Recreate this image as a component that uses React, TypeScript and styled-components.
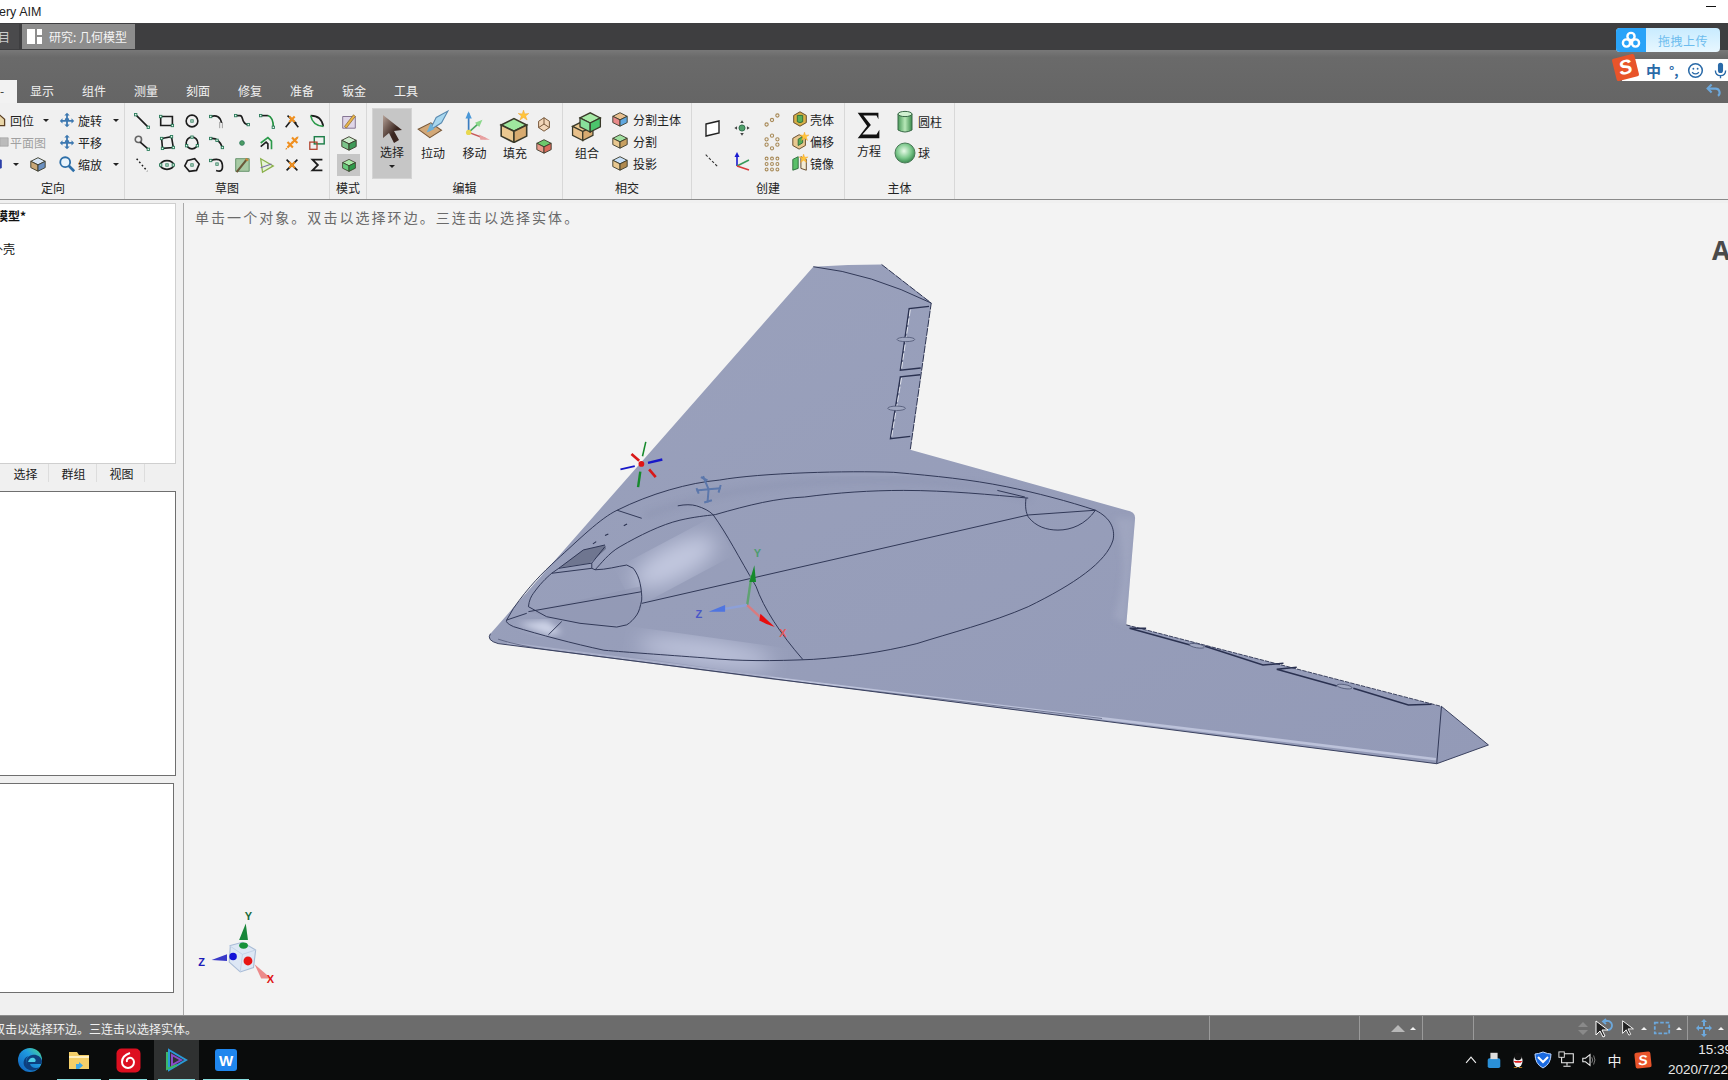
import React from "react";
import styled, { createGlobalStyle } from "styled-components";

const Global = createGlobalStyle`
  html, body { margin: 0; padding: 0; background: #f0f0f0; }
  body { font-family: "Noto Sans CJK SC", "Liberation Sans", sans-serif; overflow: hidden; }
`;

const Screen = styled.div`
  position: relative; width: 1728px; height: 1080px; overflow: hidden;
  display: flex; flex-direction: column; font-size: 12px; color: #222;
`;
const TitleBar = styled.div`
  height: 23px; background: #fff; display: flex; align-items: center; justify-content: space-between;
  padding-right: 12px; font: 12.5px "Liberation Sans", sans-serif; color: #222; flex: none;
`;
const TitleText = styled.span` margin-left: -1px; `;
const MinDash = styled.span` width: 10px; height: 1px; background: #111; margin-bottom: 10px; `;
const DocBar = styled.div`
  height: 27px; flex: none; background: #3e3e40; display: flex; gap: 3px; padding-top: 1px; box-sizing: border-box;
`;
const DocTab = styled.div<{ $active?: boolean; $w: number }>`
  width: ${p => p.$w}px; height: 25px; background: ${p => (p.$active ? "#8d8d8d" : "#4a4a4c")};
  color: ${p => (p.$active ? "#f4f4f4" : "#ccc")}; display: flex; align-items: center; gap: 7px;
  padding-left: ${p => (p.$active ? 5 : 0)}px; box-sizing: border-box; font-size: 12px;
  justify-content: ${p => (p.$active ? "flex-start" : "flex-end")};
  padding-right: ${p => (p.$active ? 0 : 9)}px;
`;
const TabBand = styled.div`
  height: 53px; flex: none; background: linear-gradient(#767676, #6a6a6a 12%, #656565);
  border-top: 1px solid #777; box-sizing: border-box; display: flex; align-items: flex-end;
`;
const RibbonTab = styled.div<{ $active?: boolean }>`
  height: 23px; display: flex; align-items: center; box-sizing: border-box; padding-bottom: 3px;
  ${p => p.$active
    ? "width: 17px; background: #f2f2f2; margin-right: 13px; color: #333; justify-content: flex-start;"
    : "width: 24px; margin-right: 28px; color: #f0f0f0; justify-content: center; white-space: nowrap;"}
  font-size: 12px;
`;
const Ribbon = styled.div`
  height: 97px; flex: none; background: #f0f0f0; border-bottom: 1px solid #8a8a8a; box-sizing: border-box;
  display: flex;
`;
const Group = styled.div<{ $w: number }>`
  width: ${p => p.$w}px; flex: none; display: flex; flex-direction: column; box-sizing: border-box;
  border-right: 1px solid #d8d8d8;
`;
const GroupBody = styled.div`
  height: 76px; display: flex; flex: none; box-sizing: border-box;
`;
const GroupLabel = styled.div<{ $shift?: number }>`
  height: 18px; display: flex; align-items: center; justify-content: center; font-size: 12px; color: #222; line-height: 1;
  padding-right: ${p => p.$shift ?? 0}px;
`;
const OrientGrid = styled.div`
  display: grid; grid-template-columns: 55px 68px; grid-auto-rows: 22px; padding-top: 6px;
`;
const ToolRow = styled.div<{ $ml?: number; $gap?: number; $off?: boolean }>`
  display: flex; align-items: center; margin-left: ${p => p.$ml ?? 0}px; gap: ${p => p.$gap ?? 3}px;
  white-space: nowrap; color: ${p => (p.$off ? "#a0a0a0" : "#222")}; min-width: 0;
`;
const Drop = styled.span<{ $ml?: number; $mt?: number; $color?: string }>`
  width: 0; height: 0; border-left: 3px solid transparent; border-right: 3px solid transparent;
  border-top: 3px solid ${p => p.$color ?? "#222"}; margin-left: ${p => p.$ml ?? 4}px; margin-top: ${p => p.$mt ?? 0}px; flex: none;
`;
const SketchGrid = styled.div`
  display: grid; grid-template-columns: repeat(8, 25px); grid-auto-rows: 22px; padding: 7px 0 0 4px;
`;
const Cell = styled.div<{ $on?: boolean }>`
  display: flex; align-items: center; justify-content: center;
  ${p => p.$on ? "background: #c6c6c6; margin: 0 6px; " : ""}
`;
const ModeCol = styled.div`
  width: 37px; display: grid; grid-auto-rows: 22px; padding: 7px 0 0 1px; box-sizing: border-box;
`;
const SelectBtn = styled.div`
  width: 40px; height: 71px; margin: 5px 0 0 5px; background: #c6c6c6; border: 1px solid #d4d4d4; box-sizing: border-box;
  display: flex; flex-direction: column; align-items: center; flex: none;
`;
const SelectIconBox = styled.div` height: 36px; display: flex; align-items: flex-end; `;
const BigLabel = styled.span` font-size: 12px; line-height: 14px; white-space: nowrap; `;
const BigTool = styled.div<{ $w: number }>`
  width: ${p => p.$w}px; flex: none; display: flex; flex-direction: column; align-items: center; padding-top: 6px; gap: 3px;
`;
const SmallCol = styled.div<{ $w?: number; $gap?: number; $pt?: number; $ml?: number }>`
  ${p => (p.$w ? `width: ${p.$w}px; flex: none;` : "")}
  display: flex; flex-direction: column; gap: ${p => p.$gap ?? 0}px; padding-top: ${p => p.$pt ?? 5}px; margin-left: ${p => p.$ml ?? 0}px;
`;
const SmallRow = styled.div<{ $h?: number; $gap?: number }>`
  height: ${p => p.$h ?? 22}px; display: flex; align-items: center; gap: ${p => p.$gap ?? 4}px; white-space: nowrap;
`;
const CreateWrap = styled.div`
  display: flex; padding-left: 5px; flex: none;
`;
const CreateCol = styled.div<{ $rowH: number; $pt: number }>`
  width: 30px; display: grid; grid-auto-rows: ${p => p.$rowH}px; padding-top: ${p => p.$pt}px; flex: none;
`;
const Main = styled.div`
  height: 815px; flex: none; display: flex; padding-top: 3px; box-sizing: border-box; background: #f0f0f0;
`;
const Sidebar = styled.div`
  width: 183px; flex: none; display: flex; flex-direction: column; overflow: hidden;
`;
const Panel = styled.div<{ $h: number; $w: number; $dark?: boolean; $mt?: number }>`
  width: ${p => p.$w}px; height: ${p => p.$h}px; margin-top: ${p => p.$mt ?? 0}px; flex: none; background: #fff; box-sizing: border-box;
  border: 1px solid ${p => (p.$dark ? "#6f6f6f" : "#cfcfcf")}; border-left: none; overflow: hidden;
`;
const TreeRow = styled.div<{ $ml: number; $bold?: boolean; $mt: number }>`
  margin: ${p => p.$mt}px 0 0 ${p => p.$ml}px; font-size: 12px; font-weight: ${p => (p.$bold ? 700 : 400)}; color: #111; line-height: 14px; white-space: nowrap;
`;
const SideTabs = styled.div`
  height: 27px; width: 175px; flex: none; display: flex; box-sizing: border-box; padding-left: 1px;
`;
const SideTab = styled.div`
  width: 48px; height: 18px; border-right: 1px solid #ddd; border-left: 1px solid transparent; box-sizing: border-box;
  display: flex; align-items: center; justify-content: center; font-size: 12px; color: #222; padding-left: 1px;
`;
const Viewport = styled.div`
  position: relative; flex: 1; background: #f3f3f3; border-left: 1px solid #a9a9a9; overflow: hidden;
`;
const Hint = styled.div`
  position: absolute; left: 11px; top: 5px; font-size: 14px; letter-spacing: 2.05px; color: #6a6a6a; white-space: nowrap; line-height: 18px;
`;
const CutLetter = styled.div`
  position: absolute; right: -2px; top: 32px; font: 700 26px "Open Sans", "Liberation Sans", sans-serif; color: #4a4a4a; line-height: 30px;
`;
const Scene = styled.svg`
  position: absolute; left: -184px; top: -203px; width: 1728px; height: 1080px; pointer-events: none;
`;
const StatusBar = styled.div`
  height: 25px; flex: none; background: #6c6c6c; border-top: 1px solid #8d8d8d; box-sizing: border-box;
  display: flex; align-items: center; color: #f0f0f0; font-size: 12px; position: relative;
`;
const StatusText = styled.div` margin-left: -7px; white-space: nowrap; width: 1216px; flex: none; `;
const StatusCell = styled.div<{ $w: number; $pl?: number }>`
  width: ${p => p.$w}px; height: 100%; flex: none; border-left: 1px solid #9a9a9a; box-sizing: border-box;
  display: flex; align-items: center; padding-left: ${p => p.$pl ?? 0}px; gap: 5px;
`;
const StatusTools = styled.div`
  flex: 1; height: 100%; display: flex; align-items: center; border-left: 1px solid #9a9a9a; padding-left: 104px; overflow: hidden;
`;
const Spinner = styled.div`
  display: flex; flex-direction: column; gap: 3px; flex: none; margin-right: 5px;
`;
const DownTri = styled.span`
  width: 0; height: 0; border-left: 5px solid transparent; border-right: 5px solid transparent; border-top: 5px solid #8a8a8a;
`;
const ToolDivider = styled.span`
  width: 1px; height: 100%; background: #9a9a9a; flex: none; margin: 0 6px 0 5px;
`;
const UpTri = styled.span<{ $color?: string; $s?: number; $ml?: number }>`
  width: 0; height: 0; flex: none; margin-left: ${p => p.$ml ?? 0}px;
  border-left: ${p => p.$s ?? 3}px solid transparent; border-right: ${p => p.$s ?? 3}px solid transparent;
  border-bottom: ${p => p.$s ?? 3}px solid ${p => p.$color ?? "#f2f2f2"};
`;
const Taskbar = styled.div`
  height: 40px; flex: none; background: #0a0c0c; display: flex; align-items: center; position: relative; color: #eee;
`;
const TaskBtn = styled.div<{ $active?: boolean; $w: number; $line?: boolean }>`
  width: ${p => p.$w}px; height: 40px; flex: none; display: flex; align-items: center; justify-content: center; position: relative;
  background: ${p => (p.$active ? "#2f3131" : "transparent")};
  ${p => p.$line ? `&::after { content: ""; position: absolute; left: 4px; right: 4px; bottom: 0; height: 1.5px; background: #8adfe0; }` : ""}
`;
const WpsBox = styled.div`
  width: 22px; height: 22px; border-radius: 3px; background: #1f86ee; color: #fff; display: flex; align-items: center; justify-content: center;
  font: 700 15px "Liberation Sans", sans-serif;
`;
const SogouBox = styled.div<{ $size: number; $rot: number }>`
  width: ${p => p.$size}px; height: ${p => p.$size}px; background: #e8542a; color: #fff; border-radius: 2px; flex: none;
  transform: rotate(${p => p.$rot}deg); display: flex; align-items: center; justify-content: center;
  font: italic 900 ${p => p.$size * 0.88}px/1 "Liberation Sans", sans-serif;
`;
const Tray = styled.div`
  margin-left: auto; display: flex; align-items: center; gap: 0; height: 100%;
`;
const TrayItem = styled.div<{ $w: number }>`
  width: ${p => p.$w}px; flex: none; display: flex; align-items: center; justify-content: center; font-size: 14px; color: #eee;
`;
const Clock = styled.div`
  width: 60px; flex: none; display: flex; flex-direction: column; align-items: flex-end; font: 13.5px "Liberation Sans", sans-serif; line-height: 20px; white-space: nowrap; color: #e8e8e8;
  & > span:first-child { margin-right: -4px; }
`;
const UploadBox = styled.div`
  position: absolute; left: 1616px; top: 28px; width: 104px; height: 24px; border-radius: 4px; overflow: hidden; display: flex; background: linear-gradient(#c8ebff, #e8f7ff);
`;
const UploadIcon = styled.div`
  width: 30px; background: #2aa3f8; display: flex; align-items: center; justify-content: center; flex: none;
`;
const UploadText = styled.div`
  flex: 1; display: flex; align-items: center; justify-content: center; color: #6cbcee; font-size: 12px; letter-spacing: 0.5px;
`;
const ImeBar = styled.div`
  position: absolute; left: 1622px; top: 59px; width: 106px; height: 22px; background: #fff; display: flex; align-items: center;
  padding-left: 24px; box-sizing: border-box; gap: 8px; color: #2a6aa8;
`;
const ImeChar = styled.span<{ $size: number }>` font-size: ${p => p.$size}px; font-weight: 700; line-height: 1; `;
const ImeLogo = styled.div`
  position: absolute; left: 1614px; top: 56px;
`;
const UndoMark = styled.svg`
  position: absolute; left: 1706px; top: 83px; width: 16px; height: 16px;
`;

/* ---------- icons ---------- */
const Svg = styled.svg<{ $s: number; $ml?: number }>`
  width: ${p => p.$s}px; height: ${p => p.$s}px; flex: none; margin-left: ${p => p.$ml ?? 0}px; display: block;
`;
const N = ({ x, y }: { x: number; y: number }) => (
  <rect x={x - 1.3} y={y - 1.3} width="2.6" height="2.6" fill="#e8f5ea" stroke="#2c7d5c" strokeWidth="1" />
);
const K = "#1c1c1c";
const B = { fill: "none", stroke: K, strokeWidth: 1.8 } as const;
const Burst = ({ x, y }: { x: number; y: number }) => (
  <path d={`M${x - 3} ${y - 3}L${x + 3} ${y + 3}M${x + 3} ${y - 3}L${x - 3} ${y + 3}`} stroke="#f09020" strokeWidth="2.4" fill="none" />
);

const sketchIcons: React.ReactNode[] = [
  <g><path d="M4 4L16 16" {...B} /><N x={3} y={3} /><N x={17} y={17} /></g>,
  <g><path d="M3 5h13v10H3z" {...B} /><N x={3} y={5} /><N x={16} y={15} /></g>,
  <g><circle cx="10" cy="10" r="6.5" {...B} /><N x={10} y={10} /></g>,
  <g><path d="M3 5Q13 2 15 12" {...B} /><path d="M13 11v7M16 11v7" stroke="#999" strokeWidth="1" /><N x={3} y={5} /></g>,
  <g><path d="M3 4h5c3 0 2 5 4 7 1 2 3 3 5 3" {...B} /><N x={3} y={4} /><N x={17} y={14} /></g>,
  <g><path d="M3 4h8" {...B} /><path d="M11 4q6 2 6 13" fill="none" stroke="#1f8f3d" strokeWidth="1.8" /><N x={3} y={4} /><N x={17} y={17} /></g>,
  <g><path d="M3 17L10 8L17 17M5 4L15 13" {...B} /><Burst x={10} y={8} /></g>,
  <g><path d="M3 4Q15 4 17 16" {...B} /><path d="M3 4Q5 15 17 16" fill="none" stroke="#2b9a4a" strokeWidth="1.8" /></g>,

  <g><circle cx="6" cy="6" r="3.5" fill="none" stroke="#666" strokeWidth="1.8" /><path d="M8 9L16 16" {...B} /><N x={17} y={17} /></g>,
  <g><path d="M4 5L15 3L17 15L5 16Z" {...B} /><N x={4} y={5} /><N x={15} y={3} /><N x={17} y={15} /><N x={5} y={16} /></g>,
  <g><circle cx="10" cy="10" r="6.5" {...B} /><N x={10} y={3.5} /><N x={16} y={13} /><N x={4} y={13} /></g>,
  <g><path d="M3 5Q12 4 16 15" {...B} /><N x={3} y={5} /><N x={10} y={7} /><N x={16} y={15} /></g>,
  <g><circle cx="10" cy="10" r="2.6" fill="#4f9d63" stroke="#2c7d5c" /></g>,
  <g><path d="M3 10L11 4L15 8V17" fill="none" stroke="#2b9a4a" strokeWidth="1.8" /><path d="M3 14L9 9L11 11V17" {...B} /></g>,
  <g><path d="M3 17L17 3" stroke="#e08a20" strokeWidth="1.2" strokeDasharray="2 1" /><Burst x={8} y={12} /><Burst x={13} y={7} /></g>,
  <g><rect x="7" y="3" width="11" height="8" fill="none" stroke="#1f7f4a" strokeWidth="1.6" /><rect x="2" y="9" width="8" height="8" fill="none" stroke="#b0402a" strokeWidth="1.4" /></g>,

  <g><path d="M4 3L16 17" stroke={K} strokeWidth="1.6" strokeDasharray="2 2.5" /></g>,
  <g><ellipse cx="10" cy="10" rx="7.5" ry="4.8" {...B} /><N x={10} y={10} /><N x={3} y={10} /><N x={17} y={10} /></g>,
  <g><path d="M5 5L13 3L18 9L15 16L7 17L2 11Z" {...B} /><N x={10} y={10} /></g>,
  <g><path d="M3 5Q15 1 16 10T9 16" {...B} /><N x={3} y={5} /><N x={10} y={9} /></g>,
  <g><path d="M3 3H18V17H3Z" fill="#a8caa4" stroke="#5b8c62" /><path d="M4 18L16 3" stroke="#6b5a3a" strokeWidth="2.4" /><path d="M14 3l3 2" stroke="#c98a3a" strokeWidth="2" /></g>,
  <g><path d="M3 3L17 11L5 18Z" fill="#e6f3d8" stroke="#8ab04a" strokeWidth="1.4" /><path d="M3 13L15 9" stroke="#7a6aa8" strokeWidth="1.2" /></g>,
  <g><path d="M4 4L16 16M16 4L4 16" {...B} /><Burst x={10} y={10} /></g>,
  <g><path d="M16 4H5L11 10L5 16H16" fill="none" stroke={K} strokeWidth="2" /></g>,
];

const I = ({ s = 18, ml, v = 20, children }: { s?: number; ml?: number; v?: number; children: React.ReactNode }) => (
  <Svg $s={s} $ml={ml} viewBox={`0 0 ${v} ${v}`}>{children}</Svg>
);

const Box = ({ top = "#a4e6a4", side = "#4cae5c", front = "#d9ab70", x = 0, y = 0, k = 1 }: any) => (
  <g transform={`translate(${x} ${y}) scale(${k})`}>
    <path d="M2 7L10 3L18 7L10 11Z" fill={top} stroke="#3a3a2a" strokeWidth="1" />
    <path d="M2 7V14L10 18V11Z" fill={front} stroke="#3a3a2a" strokeWidth="1" />
    <path d="M18 7V14L10 18V11Z" fill={side} stroke="#3a3a2a" strokeWidth="1" />
  </g>
);
const Star = ({ x, y }: { x: number; y: number }) => (
  <path d={`M${x} ${y - 5}L${x + 1.2} ${y - 1.4}L${x + 5} ${y - 1.8}L${x + 2} ${y + .6}L${x + 3.4} ${y + 4.4}L${x} ${y + 2}L${x - 3.4} ${y + 4.4}L${x - 2} ${y + .6}L${x - 5} ${y - 1.8}L${x - 1.2} ${y - 1.4}Z`} fill="#ffc53a" stroke="#f09a20" strokeWidth=".4" />
);

const RotateIcon = () => (
  <I s={18}><g fill="#3d78b0"><path d="M10 2l3 3h-2v3H9V5H7z" /><path d="M2 11l3-3v2h3v2H5v2z" /><path d="M18 11l-3 3v-2h-3v-2h3V8z" /><path d="M10 18l-3-3h2v-3h2v3h2z" /></g><circle cx="10" cy="10" r="2.5" fill="#3d78b0" /></I>
);
const ZoomIcon = () => (
  <I s={18}><circle cx="8" cy="8" r="5.5" fill="#eaf4fb" stroke="#2c6ea8" strokeWidth="2" /><path d="M12 12L18 18" stroke="#2c6ea8" strokeWidth="3" /></I>
);
const HouseIcon = ({ ml }: { ml: number }) => (
  <I s={16} ml={ml}><path d="M3 9L10 3L17 9V17H3Z" fill="#e9d6a8" stroke="#5a3e22" strokeWidth="1.6" /></I>
);

/* ---------- aircraft ---------- */
const bodyPath = "M445,575 L738,242 Q770,240 800,240 L845,275 L826,408 L1022,463 Q1030,464 1030,470 L1022,567 L1308,641 L1350.6,676 L1303.7,693 L452,584 Q441,581 445,575 Z";

const Aircraft = () => (
  <Scene viewBox="0 0 1568 980">
    <defs>
      <linearGradient id="body" x1="0" y1="0" x2="1" y2="1">
        <stop offset="0" stopColor="#9aa1bc" />
        <stop offset="1" stopColor="#939ab7" />
      </linearGradient>
      <filter id="b8"><feGaussianBlur stdDeviation="9" /></filter>
      <filter id="b3"><feGaussianBlur stdDeviation="3" /></filter>
      <filter id="b1"><feGaussianBlur stdDeviation=".6" /></filter>
      <clipPath id="clipBody"><path d={bodyPath} /></clipPath>
    </defs>
    <path d={bodyPath} fill="url(#body)" />
    <g clipPath="url(#clipBody)">
      <ellipse cx="612" cy="510" rx="42" ry="16" fill="#c2c8df" filter="url(#b8)" transform="rotate(-28 612 510)" />
      <ellipse cx="640" cy="592" rx="62" ry="11" fill="#bfc5dd" filter="url(#b8)" transform="rotate(8 640 592)" />
      <path d="M470,566 L496,563 L510,574 L497,576 Z" fill="#ccd2e6" filter="url(#b3)" />
      <path d="M585,468 Q680,432 830,436 Q900,440 935,452" fill="none" stroke="#838aa8" strokeWidth="5" filter="url(#b3)" opacity=".3" />
      <path d="M460,584 L700,615" stroke="#aab0ca" strokeWidth="3" filter="url(#b1)" />
      <path d="M700,615 L1303,689" stroke="#bcc2da" strokeWidth="2.4" filter="url(#b1)" />
      <path d="M1012,470 Q1026,520 1010,560 L1022,567 L1030,470Z" fill="#a8aec6" opacity=".5" filter="url(#b3)" />
      <path d="M479,555 L582,532 L582,553 L568,567 L528,566Z" fill="#8f96b2" opacity=".5" />
    </g>
    <path d="M508,515 L529,499 L549,494.5 L550,498 L540,507 L535,511Z" fill="#6f7690" />
    <g fill="none" stroke="#2a3150" strokeWidth=".85">
      {/* outer dome */}
      <path d="M459.8,562.6 L465.9,552 C480,532 492,520 505,508 C525,490 545,470 560,463 C590,448 625,438 653,435.6 C690,429 770,427 811,428.6 C850,432 880,435 913,441.6 C940,447 970,455 994,463 C1008,470 1012,480 1010,490 C1004,510 975,530 933,550.5 C900,565 860,575 832,584 C800,592 770,596 738,598.3 C700,600 670,600 640,597 C600,594 570,592 548,590 C520,584 490,576 465.9,568.6 Q458,565 459.8,562.6" />
      {/* inner shoulder line */}
      <path d="M540,517 C545,512 552,502 562.7,496 C580,486 600,476 617,472 C630,469 640,468 649,467 C680,458 705,452 730,451 C760,447 790,445 820,445 C860,445 900,449 933,452" />
      {/* centre line */}
      <path d="M479.5,555 L581.7,537" />
      <path d="M582.3,547.5 L933,467.3 L994,463" />
      {/* cross section */}
      <path d="M615,459 Q625,457 632,459 Q642,462 647,467 C660,485 670,505 686,532 C693,552 708,575 728.4,598.3" />
      {/* intake */}
      <path d="M479.5,550.5 C480,545 482,541 484,538.4 C490,530 495,525 500.6,520.2 L537,515.7 L540,517 C550,517 560,514 568.7,512.7 L574.7,515.7 C578,520 580,525 580.8,529.3 C582,535 582.5,540 582.3,544.5 C581,550 580,555 577.8,558 C575,562 572,565 568.7,567 L559.6,569 L526.3,565.6 L496,559.6 L479.5,550.5Z" />
      <path d="M500.6,520.2 L507,515.7 L537,511 M537,515.7 L537,511 L549,496 M507,515.7 L529.4,499 L549,494.5" />
      {/* leading lines */}
      <path d="M560,463 L582.3,470.3" />
      <path d="M459.8,562.6 L478,556.5" />
      <path d="M497.6,576 L509.7,564" />
      <path d="M538,493.5 L541,491.5 M549,486 L552,484.5 M566,477 L569,475.5" strokeWidth="1" />
      {/* exhaust circle */}
      <path d="M931,452 C930,460 931,465 933,469 C940,478 950,481 960,481 C972,481 985,476 994,463" />
      <path d="M905,445 L930,451" />
      {/* wing tip */}
      <path d="M738,242 Q790,248 845,275" />
      <path d="M1308,641 L1303.7,693" />
      <path d="M452,580 Q470,586 500,590 L700,616 L1000,652" strokeOpacity=".55" />
    </g>
    <path d="M1308,641 L1350.6,676 L1303.7,693 L452,584 Q441,581 445,575" fill="none" stroke="#39405e" strokeWidth=".9" />
    <path d="M800,240 L845,275 L826,408" fill="none" stroke="#2b3250" strokeWidth=".9" strokeDasharray="7 1" />
    <path d="M1022,567 L1308,641" fill="none" stroke="#2b3250" strokeWidth=".8" strokeDasharray="4 1" />
    {/* upper flaps */}
    <g fill="none" stroke="#2a3150" strokeWidth="1.3">
      <path d="M843,278 L825,280 L817,336 L835.5,334" />
      <path d="M835,340 L817,342 L808,398 L826,396" />
    </g>
    <g fill="none" stroke="#eef0f6" strokeWidth=".8" strokeDasharray="6 2">
      <path d="M826,281 L818,335" />
      <path d="M818,343 L809,397" />
    </g>
    {/* trailing flaps */}
    <g fill="none" stroke="#2a3150" strokeWidth="1.4">
      <path d="M1025,570 L1040,570 M1025,570 L1080,585.3 M1093.5,586.5 L1146,603.4 L1164.6,601.9" />
      <path d="M1158.5,607.3 L1176.7,605.5 M1158.5,607.3 L1213,622.5 M1228,624.6 L1278,639.7 L1299,639" />
    </g>
    <g fill="#a0a7c0" stroke="#4a5270" strokeWidth=".7">
      <ellipse cx="822" cy="308" rx="8" ry="2" />
      <ellipse cx="813.6" cy="370.5" rx="8" ry="2" />
      <ellipse cx="1086" cy="586" rx="7" ry="1.8" transform="rotate(10 1086 586)" />
      <ellipse cx="1220" cy="623" rx="7" ry="1.8" transform="rotate(10 1220 623)" />
    </g>
    {/* rotation pin */}
    <g>
      <circle cx="582" cy="421" r="2.6" fill="#e01414" />
      <path d="M573,412L580,418M589,426L595,433" stroke="#d81818" strokeWidth="2.4" />
      <path d="M563,426L576,423" stroke="#1818c8" strokeWidth="1.6" /><path d="M588,420L601,417" stroke="#1818c8" strokeWidth="2.2" />
      <path d="M586,401L583,414" stroke="#168a2c" strokeWidth="1.4" /><path d="M581,428L579,442" stroke="#168a2c" strokeWidth="2.2" />
    </g>
    {/* rotate handle */}
    <g fill="none" stroke="#5b77ab" strokeWidth="1.8" filter="url(#b1)">
      <path d="M643,444L638,432M643,444L654,443M643,444L642,456M643,444L632,445" />
      <path d="M636,433L642,436M654,440L652,447M639,456L646,454M632,443L634,448" />
    </g>
    {/* centre triad */}
    <g filter="url(#b1)">
      <path d="M678,549L682,522" stroke="#5fa272" strokeWidth="2.2" />
      <path d="M680,528L684.5,513L686,528Z" fill="#138a2c" />
      <path d="M678,549L655,553" stroke="#8da0d8" strokeWidth="2.2" />
      <path d="M658,549L643,555L658,555Z" fill="#4f74e0" />
      <path d="M678,549L692,562" stroke="#d87b80" strokeWidth="2.2" />
      <path d="M690,557L703,569L695,566L689,563Z" fill="#e80f0f" />
    </g>
    <text x="684" y="505" fontSize="10" fill="#4e9c70" fontFamily="Liberation Sans" fontWeight="700">Y</text>
    <text x="631" y="561" fontSize="10" fill="#4a58c8" fontFamily="Liberation Sans" fontWeight="700">Z</text>
    <text x="707" y="578" fontSize="10" fill="#e05a5a" fontFamily="Liberation Sans" fontWeight="700">X</text>
    {/* corner triad */}
    <g>
      <path d="M209,858L220,855L232,862L230,878L218,882L208,873Z" fill="#dde7f5" stroke="#a9bcd6" strokeWidth="1" />
      <path d="M220,866L232,862M220,866L208,858M220,866L218,882" stroke="#c0d0e6" strokeWidth=".8" fill="none" />
      <ellipse cx="221" cy="858" rx="4" ry="2.8" fill="#16923a" />
      <circle cx="211.5" cy="868" r="3.4" fill="#1212d8" />
      <circle cx="225" cy="872" r="4" fill="#e81414" />
      <path d="M217,853L223,838L225,853Z" fill="#18863a" />
      <path d="M206,866L192,871L206,872Z" fill="#3a3ac8" />
      <path d="M231,875L246,888L237,888Z" fill="#ec8a8a" />
    </g>
    <text x="222" y="835" fontSize="10" fontWeight="700" fill="#1a6a3a" fontFamily="Liberation Sans">Y</text>
    <text x="180" y="877" fontSize="10" fontWeight="700" fill="#1c1cb8" fontFamily="Liberation Sans">Z</text>
    <text x="242" y="892" fontSize="10" fontWeight="700" fill="#e01414" fontFamily="Liberation Sans">X</text>
  </Scene>
);

const tabs = ["显示", "组件", "测量", "刻面", "修复", "准备", "钣金", "工具"];

export default function App() {
  return (
    <Screen>
      <Global />
      <TitleBar>
        <TitleText>ery AIM</TitleText>
        <MinDash />
      </TitleBar>
      <DocBar>
        <DocTab $w={19}>目</DocTab>
        <DocTab $w={113} $active>
          <I s={15} v={15}><path d="M0 0h8v15H0zM10 0h5v6h-5zM10 8h5v7h-5z" fill="#fff" /></I>
          研究: 几何模型
        </DocTab>
      </DocBar>
      <TabBand>
        <RibbonTab $active>-</RibbonTab>
        {tabs.map(t => <RibbonTab key={t}>{t}</RibbonTab>)}
      </TabBand>
      <Ribbon>
        <Group $w={125}>
          <GroupBody>
            <OrientGrid>
              <ToolRow><HouseIcon ml={-9} /><span>回位</span><Drop $ml={6} /></ToolRow>
              <ToolRow $ml={3} $gap={2}><RotateIcon /><span>旋转</span><Drop $ml={9} /></ToolRow>
              <ToolRow $off $gap={0}><I s={12} ml={-2}><path d="M3 3h14v14H3z" fill="#bbb" stroke="#999" /></I><span>平面图</span></ToolRow>
              <ToolRow $ml={3} $gap={2}><RotateIcon /><span>平移</span></ToolRow>
              <ToolRow $gap={4}>
                <I s={16} ml={-11}><path d="M2 5L9 2L16 5V15L9 18L2 15Z" fill="#2b3fa8" /></I>
                <Drop $ml={4} />
                <I s={18} ml={6}><Box top="#d8e6f5" side="#6a8fc0" front="#c9a878" /></I>
              </ToolRow>
              <ToolRow $ml={3} $gap={2}><ZoomIcon /><span>缩放</span><Drop $ml={9} /></ToolRow>
            </OrientGrid>
          </GroupBody>
          <GroupLabel $shift={18}>定向</GroupLabel>
        </Group>
        <Group $w={205}>
          <GroupBody>
            <SketchGrid>
              {sketchIcons.map((ic, i) => <Cell key={i}><I s={18}>{ic}</I></Cell>)}
            </SketchGrid>
          </GroupBody>
          <GroupLabel>草图</GroupLabel>
        </Group>
        <Group $w={37}>
          <GroupBody>
            <ModeCol>
              <Cell><I s={18}><path d="M3 5h14v13H3z" fill="#dfd6e8" stroke="#7b6a8a" /><path d="M5 16L15 3l2 2L7 18z" fill="#e7b54a" stroke="#7b5a20" strokeWidth=".7" /></I></Cell>
              <Cell><I s={18}><Box top="#cdeccd" side="#3f9a58" front="#7cc48a" /></I></Cell>
              <Cell $on><I s={16}><Box top="#a8eaa8" side="#2f9a4a" front="#68cc7c" /></I></Cell>
            </ModeCol>
          </GroupBody>
          <GroupLabel>模式</GroupLabel>
        </Group>
        <Group $w={196}>
          <GroupBody>
            <SelectBtn>
              <SelectIconBox>
                <I s={32} v={32}>
                  <defs><linearGradient id="cur" x1="0" y1="0" x2="1" y2="1"><stop offset="0" stopColor="#b8a49a" /><stop offset=".6" stopColor="#3a2620" /></linearGradient></defs>
                  <path d="M7 2L7 25L13 20L18 30L23 27L18 18L26 17Z" fill="url(#cur)" />
                </I>
              </SelectIconBox>
              <BigLabel>选择</BigLabel>
              <Drop $ml={0} $mt={6} />
            </SelectBtn>
            <BigTool $w={42}>
              <I s={34} v={32}><path d="M2 19L14 13L24 20L13 27Z" fill="#d2a878" stroke="#7a5a3a" /><path d="M13 20L19 8L30 2L24 13Z" fill="#a8d8f0" stroke="#5a8ab0" /><path d="M14 13L10 22L17 19Z" fill="#6cb0d8" /></I>
              <BigLabel>拉动</BigLabel>
            </BigTool>
            <BigTool $w={41}>
              <I s={34} v={32}><path d="M10 22V4" stroke="#3a7cc0" strokeWidth="1.6" /><path d="M10 2L7 9H13Z" fill="#4a98d8" /><path d="M10 22L20 13" stroke="#4ca860" strokeWidth="1.5" /><path d="M23 10L16 13L20 17Z" fill="#8ad88a" /><path d="M10 22L26 28" stroke="#c85a5a" strokeWidth="1.5" /><path d="M30 29L20 24L21 29Z" fill="#e8a0a0" /><circle cx="10" cy="22" r="2.5" fill="#e8d850" /></I>
              <BigLabel>移动</BigLabel>
            </BigTool>
            <BigTool $w={40}>
              <I s={34} v={32}><g transform="scale(1.5) translate(0 3)"><Box top="#9fe89f" side="#d8ab70" front="#eac890" /></g><Star x={24} y={6} /></I>
              <BigLabel>填充</BigLabel>
            </BigTool>
            <SmallCol $w={25} $pt={10}>
              <SmallRow><I s={18}><path d="M4 7L10 3L16 7V14L10 18L4 14Z" fill="#f2d6b8" stroke="#6a4a2a" /><path d="M10 3V10L4 14M10 10L16 14" stroke="#6a4a2a" fill="none" /></I></SmallRow>
              <SmallRow><I s={18}><Box top="#6cc86c" side="#d86a5a" front="#e89a8a" /></I></SmallRow>
            </SmallCol>
          </GroupBody>
          <GroupLabel>编辑</GroupLabel>
        </Group>
        <Group $w={129}>
          <GroupBody>
            <BigTool $w={48}>
              <I s={34} v={32}><g transform="translate(0 8) scale(1.2)"><Box top="#eac890" side="#d8ab70" front="#e8c08a" /></g><g transform="translate(7 0) scale(1.2)"><Box top="#a6eaa6" side="#4cc46c" front="#88e09a" /></g></I>
              <BigLabel>组合</BigLabel>
            </BigTool>
            <SmallCol>
              <SmallRow><I s={18}><Box top="#e8c090" side="#60a8e0" front="#e88a8a" /></I><span>分割主体</span></SmallRow>
              <SmallRow><I s={18}><Box top="#a0e0a0" side="#c8a060" front="#e8c890" /></I><span>分割</span></SmallRow>
              <SmallRow><I s={18}><Box top="#c8e0f8" side="#b08a50" front="#e8c890" /></I><span>投影</span></SmallRow>
            </SmallCol>
          </GroupBody>
          <GroupLabel>相交</GroupLabel>
        </Group>
        <Group $w={153}>
          <GroupBody>
            <CreateWrap>
              <CreateCol $rowH={33} $pt={8}>
                <Cell><I s={20}><path d="M4 6L17 3V15L4 18Z" fill="#fff" stroke="#222" strokeWidth="1.4" /></I></Cell>
                <Cell><I s={18}><path d="M3 3L17 17" stroke="#333" strokeWidth="1.2" strokeDasharray="3 2" /></I></Cell>
              </CreateCol>
              <CreateCol $rowH={33} $pt={8}>
                <Cell><I s={18}><circle cx="10" cy="10" r="3.4" fill="#4fa06a" stroke="#2a6a48" /><path d="M10 1.5L8 4.5H12ZM10 18.5L8 15.5H12ZM1.5 10L4.5 8V12ZM18.5 10L15.5 8V12Z" fill="#444" /></I></Cell>
                <Cell><I s={20}><path d="M5 15V4" stroke="#1a1ad0" strokeWidth="1.6" /><path d="M5 1L2.5 6H7.5Z" fill="#1a1ad0" /><path d="M5 15L17 9" stroke="#3a9a5a" strokeWidth="1.6" /><path d="M5 15L17 19" stroke="#d83a3a" strokeWidth="1.6" /></I></Cell>
              </CreateCol>
              <CreateCol $rowH={22} $pt={6}>
                <Cell><I s={18}><g fill="none" stroke="#a88a58" strokeWidth="1.2"><circle cx="4" cy="15" r="1.8" /><circle cx="10" cy="10" r="1.8" /><circle cx="16" cy="5" r="1.8" /></g></I></Cell>
                <Cell><I s={18}><g fill="none" stroke="#a88a58" strokeWidth="1.2"><circle cx="10" cy="3" r="1.8" /><circle cx="4" cy="7" r="1.8" /><circle cx="16" cy="7" r="1.8" /><circle cx="4" cy="13" r="1.8" /><circle cx="16" cy="13" r="1.8" /><circle cx="10" cy="17" r="1.8" /></g></I></Cell>
                <Cell><I s={18}><g fill="none" stroke="#a88a58" strokeWidth="1.2"><circle cx="4" cy="4" r="1.6" /><circle cx="10" cy="4" r="1.6" /><circle cx="16" cy="4" r="1.6" /><circle cx="4" cy="10" r="1.6" /><circle cx="10" cy="10" r="1.6" /><circle cx="16" cy="10" r="1.6" /><circle cx="4" cy="16" r="1.6" /><circle cx="10" cy="16" r="1.6" /><circle cx="16" cy="16" r="1.6" /></g></I></Cell>
              </CreateCol>
            </CreateWrap>
            <SmallCol $ml={4}>
              <SmallRow $gap={1}><I s={18}><path d="M3 6L10 2L17 6V14L10 18L3 14Z" fill="#d8b048" stroke="#5a4020" /><path d="M7 6h6v7q-3 2-6 0z" fill="#58b058" stroke="#2a6a3a" /></I><span>壳体</span></SmallRow>
              <SmallRow $gap={1}><I s={18}><path d="M2 7L9 3L16 7V15L9 19L2 15Z" fill="#e8c890" stroke="#5a4020" /><path d="M8 8L13 5V12L8 15Z" fill="#58b058" stroke="#2a6a3a" /><Star x={15} y={5} /></I><span>偏移</span></SmallRow>
              <SmallRow $gap={1}><I s={18}><path d="M2 6L8 3V16L2 18Z" fill="#5ac06a" stroke="#2a6a3a" /><path d="M11 3L17 6V18L11 16Z" fill="#f4ecd4" stroke="#5a4020" /><Star x={14} y={5} /></I><span>镜像</span></SmallRow>
            </SmallCol>
          </GroupBody>
          <GroupLabel>创建</GroupLabel>
        </Group>
        <Group $w={110}>
          <GroupBody>
            <BigTool $w={48}>
              <I s={32} v={34}><path d="M5 4H27V11L25 7H11L19 17L10 27H25L28 22V31H5L15 18Z" fill="#111" /></I>
              <BigLabel>方程</BigLabel>
            </BigTool>
            <SmallCol $pt={5} $gap={4}>
              <SmallRow $h={27} $gap={1}><I s={24} v={24}><defs><linearGradient id="cyl" x1="0" y1="0" x2="1" y2="0"><stop offset="0" stopColor="#4a9a5a" /><stop offset=".5" stopColor="#b8e8b8" /><stop offset="1" stopColor="#3a8a4a" /></linearGradient></defs><path d="M5 4V20Q12 24 19 20V4Z" fill="url(#cyl)" stroke="#3a6a48" /><ellipse cx="12" cy="4" rx="7" ry="2.6" fill="#d0f0d0" stroke="#3a6a48" /></I><span>圆柱</span></SmallRow>
              <SmallRow $h={27} $gap={1}><I s={24} v={24}><defs><radialGradient id="sph" cx=".45" cy=".4" r=".6"><stop offset="0" stopColor="#e8fae8" /><stop offset=".6" stopColor="#7cc88c" /><stop offset="1" stopColor="#3a8a50" /></radialGradient></defs><circle cx="12" cy="12" r="10" fill="url(#sph)" stroke="#4a7a58" /></I><span>球</span></SmallRow>
            </SmallCol>
          </GroupBody>
          <GroupLabel>主体</GroupLabel>
        </Group>
      </Ribbon>
      <Main>
        <Sidebar>
          <Panel $w={176} $h={261}>
            <TreeRow $bold $ml={-4} $mt={5}>模型*</TreeRow>
            <TreeRow $ml={-9} $mt={19}>外壳</TreeRow>
          </Panel>
          <SideTabs>
            <SideTab>选择</SideTab>
            <SideTab>群组</SideTab>
            <SideTab>视图</SideTab>
          </SideTabs>
          <Panel $w={176} $h={285} $dark />
          <Panel $w={174} $h={210} $mt={7} $dark />
        </Sidebar>
        <Viewport>
          <Hint>单击一个对象。双击以选择环边。三连击以选择实体。</Hint>
          <CutLetter>A</CutLetter>
          <Aircraft />
        </Viewport>
      </Main>
      <StatusBar>
        <StatusText>双击以选择环边。三连击以选择实体。</StatusText>
        <StatusCell $w={150} />
        <StatusCell $w={63} $pl={31}><UpTri $s={7} $color="#b8b8b8" /><UpTri /></StatusCell>
        <StatusCell $w={51} />
        <StatusTools>
          <Spinner><UpTri $s={5} $color="#8a8a8a" /><DownTri /></Spinner>
          <I s={22} v={22}><path d="M3 4V18L7 14L10 20L12 19L9 13H15Z" fill="#222" stroke="#fff" /><path d="M11 4h3a4.5 4.5 0 1 1 1 9M13 2l-3 2.5 3 2.5" fill="none" stroke="#6ca8dc" strokeWidth="1.8" /></I>
          <I s={18} ml={4}><path d="M4 2V16L8 12L11 18L13 17L10 11H16Z" fill="#222" stroke="#fff" /></I>
          <UpTri $ml={4} />
          <I s={18} ml={6}><path d="M2 4h16v12H2z" fill="none" stroke="#6ca8dc" strokeWidth="2" strokeDasharray="4 2" /></I>
          <UpTri $ml={5} />
          <ToolDivider />
          <I s={20}><g fill="#6ca8dc"><path d="M10 1l3 3h-2v4H9V4H7z" /><path d="M2 10l3-3v2h4v2H5v2z" /><path d="M18 10l-3 3v-2h-4V9h4V7z" /><path d="M10 19l-3-3h2v-4h2v4h2z" /></g></I>
          <UpTri $ml={4} />
        </StatusTools>
      </StatusBar>
      <Taskbar>
        <TaskBtn $w={7} />
        <TaskBtn $w={46}>
          <I s={26} v={26}>
            <defs><linearGradient id="edgeL" x1="0" y1="1" x2="1" y2="0"><stop offset="0" stopColor="#0f5cb8" /><stop offset=".6" stopColor="#1f9ae0" /><stop offset="1" stopColor="#4fdc8a" /></linearGradient></defs>
            <circle cx="13" cy="13" r="12" fill="url(#edgeL)" />
            <path d="M25 14C24 9 19 7 15 8C10 9 8 14 10 18C8 15 9 10 12 9C7 10 5 16 8 20C11 24 19 25 23 20C19 22 14 21 13 17H24Q25 16 25 14Z" fill="#0d3f7e" />
            <path d="M11 15C12 11 15 10 17 11C19 12 19 14 18 15Z" fill="#4fd0e8" />
          </I>
        </TaskBtn>
        <TaskBtn $w={52} $line>
          <I s={24} v={24}><path d="M2 4h8l2 3h10v14H2z" fill="#f4cf68" /><path d="M9 21v-5h3l-0 -2 4 3.5-4 3.5" fill="#3fa8e8" /><rect x="2" y="8" width="20" height="2" fill="#fff0c0" /></I>
        </TaskBtn>
        <TaskBtn $w={46} $line>
          <I s={25} v={25}><rect x="0.5" y="0.5" width="24" height="24" rx="5" fill="#dd0f20" /><path d="M14 5C8 7 6 11 6 14a6 6 0 0 0 12 0c0-3-3-5-5-4a3 3 0 0 0-2 4" fill="none" stroke="#fff" strokeWidth="2" /></I>
        </TaskBtn>
        <TaskBtn $w={3} />
        <TaskBtn $w={45} $active $line>
          <I s={24} v={24}><path d="M4 2L21 12L4 22Z" fill="none" stroke="#2a9ad8" strokeWidth="2" /><path d="M7 7L16 12L7 17Z" fill="none" stroke="#8a4ac8" strokeWidth="2" /><path d="M2 4L2 21L12 17" fill="none" stroke="#3ab86a" strokeWidth="2" /></I>
        </TaskBtn>
        <TaskBtn $w={54} $line><WpsBox>W</WpsBox></TaskBtn>
        <Tray>
          <TrayItem $w={22}><I s={14}><path d="M3 14L10 6L17 14" fill="none" stroke="#eee" strokeWidth="1.6" /></I></TrayItem>
          <TrayItem $w={24}><I s={18}><rect x="3" y="8" width="14" height="11" rx="2" fill="#2a90d8" /><rect x="6" y="2" width="8" height="7" fill="#ddd" /></I></TrayItem>
          <TrayItem $w={24}><I s={18}><ellipse cx="10" cy="11" rx="5" ry="7" fill="#f6f6f6" /><circle cx="10" cy="6" r="4.2" fill="#111" /><path d="M5 11h10l-2 2H7z" fill="#e02020" /><path d="M6 18h3v1H5zM11 18h3l1 1h-4z" fill="#f0a020" /></I></TrayItem>
          <TrayItem $w={25}><I s={20}><path d="M10 2Q15 4 18 4Q18 14 10 18Q2 14 2 4Q5 4 10 2Z" fill="#1a6ae0" stroke="#bcd6ff" /><path d="M5 7L10 12L15 7" fill="none" stroke="#fff" strokeWidth="2" /></I></TrayItem>
          <TrayItem $w={24}><I s={18}><path d="M4 3h13v10H4z" fill="none" stroke="#eee" strokeWidth="1.2" /><path d="M10 13v3M6 17h8" stroke="#eee" strokeWidth="1.2" /><rect x="1" y="1" width="6" height="6" fill="#0a0c0c" stroke="#eee" /></I></TrayItem>
          <TrayItem $w={22}><I s={18}><path d="M2 8h3l5-4v12l-5-4H2z" fill="none" stroke="#eee" strokeWidth="1.2" /><path d="M12 7q2 3 0 6M14 5q3 5 0 10" fill="none" stroke="#888" /></I></TrayItem>
          <TrayItem $w={27}>中</TrayItem>
          <TrayItem $w={30}><SogouBox $size={16} $rot={-6}>S</SogouBox></TrayItem>
          <TrayItem $w={10} />
          <Clock><span>15:39</span><span>2020/7/22</span></Clock>
        </Tray>
      </Taskbar>

      <UploadBox>
        <UploadIcon>
          <I s={20}><g fill="none" stroke="#fff" strokeWidth="2.4"><circle cx="10" cy="6.5" r="3.6" /><circle cx="5.5" cy="13" r="3.6" /><circle cx="14.5" cy="13" r="3.6" /></g></I>
        </UploadIcon>
        <UploadText>拖拽上传</UploadText>
      </UploadBox>
      <ImeBar>
        <ImeChar $size={15}>中</ImeChar>
        <ImeChar $size={13}>°,</ImeChar>
        <I s={17}><circle cx="10" cy="10" r="8" fill="none" stroke="#2a6aa8" strokeWidth="1.8" /><circle cx="7.5" cy="8" r="1.1" fill="#2a6aa8" /><circle cx="12.5" cy="8" r="1.1" fill="#2a6aa8" /><path d="M6 12q4 4 8 0" fill="none" stroke="#2a6aa8" strokeWidth="1.5" /></I>
        <I s={17}><rect x="7" y="1" width="6" height="12" rx="3" fill="#2a6aa8" /><path d="M4 10q0 6 6 6t6-6M10 16v3" fill="none" stroke="#2a6aa8" strokeWidth="1.6" /></I>
      </ImeBar>
      <ImeLogo><SogouBox $size={23} $rot={-14}>S</SogouBox></ImeLogo>
      <UndoMark viewBox="0 0 20 20"><path d="M3 7h9a5 5 0 0 1 3 9" fill="none" stroke="#6ca8dc" strokeWidth="2.6" /><path d="M7 2L2 7L7 12" fill="none" stroke="#6ca8dc" strokeWidth="2.6" /></UndoMark>
    </Screen>
  );
}
